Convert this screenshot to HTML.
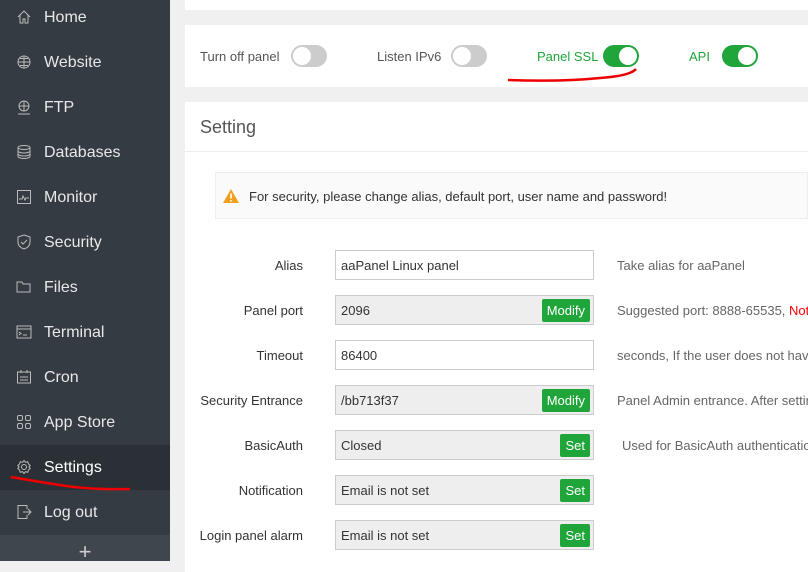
<!DOCTYPE html>
<html><head><style>
*{margin:0;padding:0;box-sizing:border-box}
body{width:808px;height:561px;overflow:hidden;background:#f0f0f0;font-family:"Liberation Sans",sans-serif;position:relative}
.sb{position:absolute;left:0;top:0;width:170px;height:561px;background:#353b42;z-index:2}
.it{position:absolute;left:0;width:170px;height:45px;color:#e8e8e8;font-size:16px;line-height:45px;padding-left:44px}
.it svg{position:absolute;left:16px;top:14px}
.sel{background:#2b3036;color:#fff}
.plus{position:absolute;left:0;top:535px;width:170px;height:26px;background:#3f464d;color:#ccc;text-align:center;font-size:22px;line-height:34px}
.card{position:absolute;left:185px;right:0;background:#fff}
.lbl{position:absolute;font-size:13px;color:#555;top:24px}
.tg{position:absolute;top:20px;width:36px;height:22px;border-radius:11px;background:#ccc}
.tg::after{content:"";position:absolute;top:2px;left:2px;width:18px;height:18px;border-radius:50%;background:#fff}
.tg.on{background:#20a53a}.tg.on::after{left:16px}
.row{position:absolute;left:0;width:808px;height:30px}
.row .l{position:absolute;right:505px;top:8px;font-size:13px;color:#333;white-space:nowrap}
.row .in{position:absolute;left:335px;top:0;width:259px;height:30px;border:1px solid #ccc;background:#fff;font-size:13px;color:#333;padding:7px 5px}
.row .in.g{background:#eee}
.row .b{position:absolute;right:3px;top:3px;height:23px;background:#20a53a;color:#fff;font-size:13px;line-height:23px;padding:0 5px;border-radius:2px}
.row .h{position:absolute;left:617px;top:8px;font-size:13px;color:#666;white-space:nowrap}
</style></head><body>
<div class="sb">
<div class="it" style="top:-5px"><svg width="16" height="16" viewBox="0 0 16 16" fill="none" stroke="#bbb"><path d="M2 8L8 2l6 6M4 6v8h3v-4h2v4h3V6"/></svg>Home</div>
<div class="it" style="top:40px"><svg width="16" height="16" viewBox="0 0 16 16" fill="none" stroke="#bbb"><circle cx="8" cy="8" r="6"/><path d="M2 8h12M8 2v12M4 4.5h8M4 11.5h8"/></svg>Website</div>
<div class="it" style="top:85px"><svg width="16" height="16" viewBox="0 0 16 16" fill="none" stroke="#bbb"><circle cx="8" cy="7" r="5"/><path d="M3 7h10M8 2v10M2 15h12"/></svg>FTP</div>
<div class="it" style="top:130px"><svg width="16" height="16" viewBox="0 0 16 16" fill="none" stroke="#bbb"><ellipse cx="8" cy="3.5" rx="6" ry="2"/><path d="M2 3.5v9c0 1 3 2 6 2s6-1 6-2v-9M2 7c0 1 3 2 6 2s6-1 6-2M2 10c0 1 3 2 6 2s6-1 6-2"/></svg>Databases</div>
<div class="it" style="top:175px"><svg width="16" height="16" viewBox="0 0 16 16" fill="none" stroke="#bbb"><rect x="1.5" y="1.5" width="13" height="13"/><path d="M3 10h3l1-3 2 4 1-2h3"/></svg>Monitor</div>
<div class="it" style="top:220px"><svg width="16" height="16" viewBox="0 0 16 16" fill="none" stroke="#bbb"><path d="M8 1l6 2v5c0 4-3 6-6 7-3-1-6-3-6-7V3z"/><path d="M5 8l2 2 4-4"/></svg>Security</div>
<div class="it" style="top:265px"><svg width="16" height="16" viewBox="0 0 16 16" fill="none" stroke="#bbb"><path d="M1 3h5l1 2h7v8H1z"/></svg>Files</div>
<div class="it" style="top:310px"><svg width="16" height="16" viewBox="0 0 16 16" fill="none" stroke="#bbb"><rect x="1" y="2" width="14" height="12"/><path d="M1 5h14M3 8l2 1.5L3 11M7 11h4"/></svg>Terminal</div>
<div class="it" style="top:355px"><svg width="16" height="16" viewBox="0 0 16 16" fill="none" stroke="#bbb"><rect x="1.5" y="3" width="13" height="11"/><path d="M5 1v3M11 1v3M4 8h8M4 11h8"/></svg>Cron</div>
<div class="it" style="top:400px"><svg width="16" height="16" viewBox="0 0 16 16" fill="none" stroke="#bbb"><rect x="1.5" y="1.5" width="5" height="5" rx="1.5"/><rect x="9.5" y="1.5" width="5" height="5" rx="1.5"/><rect x="1.5" y="9.5" width="5" height="5" rx="1.5"/><rect x="9.5" y="9.5" width="5" height="5" rx="1.5"/></svg>App Store</div>
<div class="it sel" style="top:445px"><svg width="16" height="16" viewBox="0 0 16 16" fill="none" stroke="#bbb"><circle cx="8" cy="8" r="2.5"/><path d="M8 1.5l1.5 1.8 2.3-.6.6 2.3 1.8 1.5-1.3 1.5 1.3 1.5-1.8 1.5-.6 2.3-2.3-.6L8 14.5l-1.5-1.8-2.3.6-.6-2.3L1.8 9.5 3.1 8 1.8 6.5l1.8-1.5.6-2.3 2.3.6z"/></svg>Settings</div>
<div class="it" style="top:490px"><svg width="16" height="16" viewBox="0 0 16 16" fill="none" stroke="#bbb"><path d="M11 5V1.5H2v13h9V11M7 8h8M12 5l3 3-3 3"/></svg>Log out</div>
<div class="plus">+</div>
</div>
<div class="card" style="top:0;height:10px"></div>
<div class="card" style="top:25px;height:62px">
<span class="lbl" style="left:15px">Turn off panel</span><div class="tg" style="left:106px"></div>
<span class="lbl" style="left:192px">Listen IPv6</span><div class="tg" style="left:266px"></div>
<span class="lbl" style="left:352px;color:#20a53a">Panel SSL</span><div class="tg on" style="left:418px"></div>
<span class="lbl" style="left:504px;color:#20a53a">API</span><div class="tg on" style="left:537px"></div>
</div>
<div class="card" style="top:102px;height:470px">
<div style="height:50px;border-bottom:1px solid #eee;font-size:18px;color:#555;padding:15px 15px">Setting</div>
<div style="position:absolute;left:30px;top:70px;right:0;height:47px;background:#fafafa;border:1px solid #eee;font-size:13px;color:#333;padding:16px 0 0 33px">
<svg style="position:absolute;left:7px;top:16px" width="16" height="14" viewBox="0 0 16 14"><path d="M8 0l8 14H0z" fill="#f0a020"/><path d="M8 4.5v5M8 11v1.5" stroke="#fff" stroke-width="1.6"/></svg>For security, please change alias, default port, user name and password!</div>
</div>
<div class="row" style="top:250px"><span class="l">Alias</span><div class="in">aaPanel Linux panel</div><span class="h">Take alias for aaPanel</span></div>
<div class="row" style="top:295px"><span class="l">Panel port</span><div class="in g">2096<span class="b">Modify</span></div><span class="h">Suggested port: 8888-65535, <span style="color:#f00">Not</span></span></div>
<div class="row" style="top:340px"><span class="l">Timeout</span><div class="in">86400</div><span class="h">seconds, If the user does not have</span></div>
<div class="row" style="top:385px"><span class="l">Security Entrance</span><div class="in g">/bb713f37<span class="b">Modify</span></div><span class="h">Panel Admin entrance. After setting</span></div>
<div class="row" style="top:430px"><span class="l">BasicAuth</span><div class="in g">Closed<span class="b">Set</span></div><span class="h" style="left:622px">Used for BasicAuth authentication</span></div>
<div class="row" style="top:475px"><span class="l">Notification</span><div class="in g">Email is not set<span class="b">Set</span></div></div>
<div class="row" style="top:520px"><span class="l">Login panel alarm</span><div class="in g">Email is not set<span class="b">Set</span></div></div>
<svg style="position:absolute;left:0;top:0;z-index:3" width="808" height="561"><path d="M508 80Q560 82 600 78Q630 76 636 69" stroke="#e00" stroke-width="2.5" fill="none"/><path d="M11 477Q40 482 60 485Q90 490 130 489" stroke="#e00" stroke-width="2.5" fill="none"/></svg>
</body></html>
